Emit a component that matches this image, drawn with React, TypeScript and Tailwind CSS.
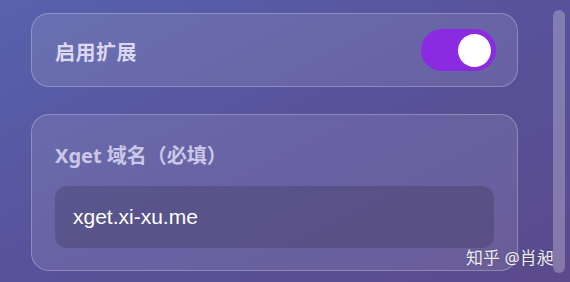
import React from 'react';

export default function App() {
  return (
    <div
      className="relative w-[570px] h-[282px] overflow-hidden bg-gradient-to-br from-[#5862ad] via-[#57529a] to-[#5b4a8c]"
      style={{ fontFamily: '"Noto Sans", "Noto Sans CJK SC", sans-serif' }}
    >
      <div className="flex">
        {/* 内容区 */}
        <div className="flex flex-col gap-[27px] pl-[31px] pt-[13px] w-[518px]">
          <div className="flex items-center justify-between h-[74px] rounded-[18px] border border-white/25 bg-white/10 pl-[23px] pr-[21px]">
            <span className="pt-[5px] text-[20px] font-bold text-[#dcd8f0] tracking-[0.5px]">启用扩展</span>
            <button className="flex items-center justify-end w-[75px] h-[42px] rounded-full bg-[#8a2be2] pr-[5px]">
              <span className="w-[33px] h-[33px] rounded-full bg-white" />
            </button>
          </div>

          <div className="flex flex-col h-[157px] rounded-[18px] border border-white/25 bg-white/10 px-[23px] pt-[26px]">
            <label className="text-[20px] font-bold text-[#cbc7e8] leading-[30px]">Xget 域名（必填）</label>
            <div className="mt-[15px] flex items-center h-[62px] rounded-[12px] bg-black/15 px-[18px]">
              <span
                className="text-[21px] text-white"
                style={{ fontFamily: '"Liberation Sans", Arial, sans-serif' }}
              >
                xget.xi-xu.me
              </span>
            </div>
          </div>
        </div>

        {/* 滚动条 */}
        <div className="ml-[35px] pt-[10px]">
          <div className="w-[12px] h-[263px] rounded-full bg-white/25" />
        </div>
      </div>

      <span
        className="absolute left-[466px] top-[245px] text-[17px] text-white/90"
        style={{ textShadow: '0 0 2px rgba(0,0,0,0.3)' }}
      >
        知乎 @肖昶
      </span>
    </div>
  );
}
